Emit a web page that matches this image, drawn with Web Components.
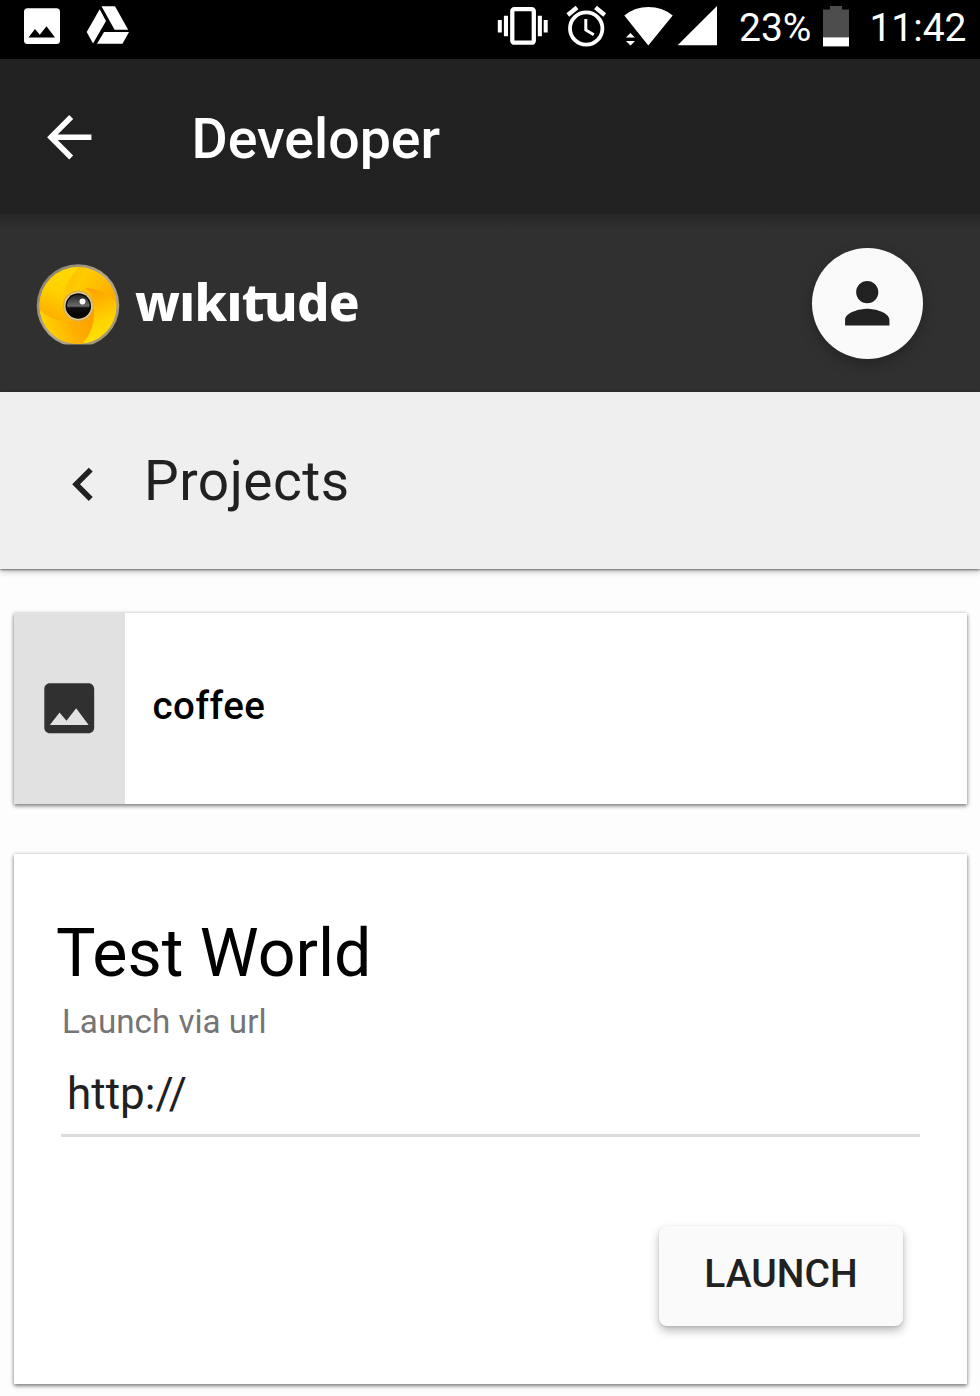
<!DOCTYPE html>
<html lang="en">

<head>
  <meta charset="UTF-8">
  <meta name="viewport" content="width=device-width, initial-scale=1.0">
  <title>Developer</title>
  <style>
    body {
      margin: 0;
      background: #fdfdfd;
      font-family: Roboto, "Liberation Sans", sans-serif;
      color: #212121;
      overflow: hidden;
    }

    main {
      display: flex;
      flex-direction: column;
      gap: 50px;
      padding: 44px 13px 12px 14px;
    }
  </style>
</head>

<body>
  <status-bar battery="23%" time="11:42"></status-bar>
  <app-bar>Developer</app-bar>
  <brand-bar>wıkıtude</brand-bar>
  <section-bar>Projects</section-bar>
  <main>
    <project-card>coffee</project-card>
    <launch-card label="Launch via url" value="http://">
      Test World
      <raised-button slot="action">LAUNCH</raised-button>
    </launch-card>
  </main>

  <script>
    const ICONS = {
      back: '<path d="M20 11H7.83l5.59-5.59L12 4l-8 8 8 8 1.41-1.41L7.83 13H20v-2z"/>',
      chevron: '<path d="M15.41 7.41L14 6l-6 6 6 6 1.41-1.41L10.83 12z"/>',
      person: '<path d="M12 12c2.21 0 4-1.79 4-4s-1.79-4-4-4-4 1.79-4 4 1.79 4 4 4zm0 2c-2.67 0-8 1.34-8 4v2h16v-2c0-2.66-5.33-4-8-4z"/>',
      image: '<path d="M21 19V5c0-1.1-.9-2-2-2H5c-1.1 0-2 .9-2 2v14c0 1.1.9 2 2 2h14c1.1 0 2-.9 2-2zM8.5 13.5l2.5 3.010L14.500 12l4.500 6H5l3.500-4.500z"/>'
    };

    function define(name, render) {
      customElements.define(name, class extends HTMLElement {
        constructor() {
          super();
          this.attachShadow({ mode: 'open' });
        }

        connectedCallback() {
          const template = document.createElement('template');
          template.innerHTML = render(this);
          this.shadowRoot.replaceChildren(template.content.cloneNode(true));
        }
      });
    }

    define('md-icon', (el) => `
      <style>
        :host {
          display: block;
          flex: none;
          width: 66.5px;
          height: 66.5px;
        }

        svg {
          display: block;
          width: 100%;
          height: 100%;
          fill: currentColor;
        }
      </style>
      <svg viewBox="0 0 24 24">${ICONS[el.getAttribute('name')]}</svg>
    `);

    define('status-bar', (el) => `
      <style>
        :host {
          display: flex;
          justify-content: space-between;
          height: 59px;
          background: #000;
          color: #fff;
          font-size: 39px;
          line-height: 57px;
        }

        div {
          display: flex;
        }

        .notifications {
          padding-left: 23.5px;
          gap: 26.5px;
        }

        .system {
          padding-right: 13.5px;
        }

        svg {
          display: block;
          flex: none;
          height: 59px;
          fill: #fff;
        }

        .alarm {
          margin: 0 17px 0 18px;
        }

        .signal {
          margin: 0 22px 0 4px;
        }

        .battery {
          margin: 0 20px 0 12px;
        }
      </style>
      <div class="notifications">
        <svg width="36" viewBox="0 0 36 59"><path fill-rule="evenodd" d="M3.5 8.2H32.5A3.5 3.5 0 0 1 36 11.7V40.5A3.5 3.5 0 0 1 32.5 44H3.5A3.5 3.5 0 0 1 0 40.5V11.7A3.5 3.5 0 0 1 3.5 8.2zM4.5 37.5H31L22.5 26.2 15.8 34.8 11 29z"/></svg>
        <svg width="43" viewBox="86 0 43 59"><path d="M99.7 9.3L106 21 93 43.5 86.7 32zM101.5 6.3H115L128.2 29.8H114.6zM104 32H129L122.5 43.7H97z"/></svg>
      </div>
      <div class="system">
        <svg width="51" viewBox="496 0 51 59"><rect x="511.3" y="9.2" width="21.5" height="33.5" rx="2" fill="none" stroke="#fff" stroke-width="4.3"/><path d="M496.8 20h4v12.5h-4zM502.9 15.7h4.1v20.6h-4.1zM536.8 15.7h4.1v20.6h-4.1zM542.7 20h4v12.5h-4z"/></svg>
        <svg class="alarm" width="40" viewBox="565 0 40 59"><g fill="none" stroke="#fff"><circle cx="585.2" cy="28.5" r="16.2" stroke-width="3.8"/><path d="M584.8 19v11l8 4.8" stroke-width="3"/><path d="M566.8 15l9.2-7.5M594.5 7.5l9.2 7.5" stroke-width="4.3"/></g></svg>
        <svg width="50" viewBox="622 0 50 59"><path d="M647.3 45.5L623.3 15.4Q634 7 647.5 7T671.7 15.4zM629.4 33l4.5 4.6h-9zM625 41h9l-4.5 4.4z"/></svg>
        <svg class="signal" width="40" viewBox="676 0 40 59"><path d="M716 6V45.3H676.6z"/></svg>
        <span>${el.getAttribute('battery')}</span>
        <svg class="battery" width="26" viewBox="823 0 26 59"><path fill="#4d4d4d" d="M823 9.5h7V6h12v3.5h7V38h-26z"/><path d="M823 37.4h26v9h-26z"/></svg>
        <span>${el.getAttribute('time')}</span>
      </div>
    `);

    define('app-bar', () => `
      <style>
        :host {
          display: flex;
          align-items: center;
          box-sizing: border-box;
          height: 155px;
          padding: 1px 0 0 36px;
          gap: 89px;
          background: #212121;
          color: #fff;
        }

        h1 {
          margin: 0;
          padding-top: 5px;
          font-size: 55.5px;
          font-weight: 500;
          line-height: 66px;
        }
      </style>
      <md-icon name="back"></md-icon>
      <h1><slot></slot></h1>
    `);

    define('wikitude-logo', () => `
      <style>
        :host {
          display: block;
          flex: none;
          width: 84px;
          height: 84px;
        }

        svg {
          display: block;
        }
      </style>
      <svg width="84" height="84" viewBox="0 0 84 84">
        <defs>
          <clipPath id="cut"><path d="M0 0h84v81.5H0z"/></clipPath>
          <clipPath id="disc"><circle cx="42" cy="42.5" r="38.5"/></clipPath>
          <linearGradient id="rim" x1="0" y1="0" x2="1" y2="1">
            <stop offset="0" stop-color="#7d776c"/>
            <stop offset=".5" stop-color="#b5a98c"/>
            <stop offset="1" stop-color="#9c906c"/>
          </linearGradient>
          <linearGradient id="a" x1="0" y1="0" x2="1" y2=".4">
            <stop offset="0" stop-color="#ffb800"/>
            <stop offset=".4" stop-color="#ffcc00"/>
            <stop offset="1" stop-color="#ffac00"/>
          </linearGradient>
          <linearGradient id="b" x1=".3" y1="0" x2=".5" y2="1">
            <stop offset="0" stop-color="#ffa000"/>
            <stop offset=".6" stop-color="#ffd400"/>
            <stop offset="1" stop-color="#ffe600"/>
          </linearGradient>
          <linearGradient id="c" x1="1" y1="0" x2="0" y2=".3">
            <stop offset="0" stop-color="#ff9c00"/>
            <stop offset=".5" stop-color="#ffb000"/>
            <stop offset="1" stop-color="#ffd800"/>
          </linearGradient>
          <linearGradient id="d" x1=".3" y1="1" x2=".6" y2="0">
            <stop offset="0" stop-color="#ffaa00"/>
            <stop offset=".5" stop-color="#ffd000"/>
            <stop offset="1" stop-color="#ffd800"/>
          </linearGradient>
          <linearGradient id="pupil" x1="0" y1="0" x2="0" y2="1">
            <stop offset="0" stop-color="#222"/>
            <stop offset=".5" stop-color="#6c6c6c"/>
            <stop offset=".58" stop-color="#111"/>
            <stop offset="1" stop-color="#000"/>
          </linearGradient>
          <radialGradient id="ring">
            <stop offset=".82" stop-color="#f0e2bc"/>
            <stop offset="1" stop-color="#cfa23c"/>
          </radialGradient>
        </defs>
        <g clip-path="url(#cut)">
          <circle cx="42" cy="42.5" r="41.3" fill="url(#rim)"/>
          <g clip-path="url(#disc)">
            <path fill="#ffc400" d="M0 0h84v84H0z"/>
            <path fill="url(#a)" d="M27 40Q27 20 44 3L80 3 84 44Q68 25 49 25 33 27 27 40z"/>
            <path fill="url(#b)" d="M49 25Q70 25 82 45L84 84 44 84Q60 68 58 45 57 30 49 25z"/>
            <path fill="url(#c)" d="M58 45Q60 68 43 84L3 84 2 45Q18 60 36 58 52 58 58 45z"/>
            <path fill="url(#d)" d="M36 58Q15 60 2 45L2 2 45 2Q27 20 27 40 28 52 36 58z"/>
          </g>
          <circle cx="42.3" cy="43" r="15.2" fill="url(#ring)"/>
          <circle cx="42.3" cy="43" r="12.8" fill="#050505"/>
          <circle cx="42.3" cy="43" r="11.3" fill="url(#pupil)"/>
          <circle cx="46.5" cy="38.5" r="3" fill="#fff"/>
        </g>
      </svg>
    `);

    define('brand-bar', () => `
      <style>
        :host {
          display: flex;
          align-items: center;
          box-sizing: border-box;
          height: 177.5px;
          padding: 0 57px 0 36px;
          background: linear-gradient(#272727, #303030 16px);
          color: #fff;
        }

        wikitude-logo {
          margin-top: 4px;
        }

        .name {
          position: relative;
          margin: 0 0 4px 15px;
          font-family: "Noto Sans", "Open Sans", sans-serif;
          font-size: 51px;
          font-weight: 800;
          line-height: 70px;
          letter-spacing: -.6px;
        }

        /* joins the crossbar of the t to the u */
        .name::after {
          content: "";
          position: absolute;
          left: 112px;
          top: 27px;
          width: 29px;
          height: 6px;
          background: #fff;
        }

        .avatar {
          display: grid;
          place-items: center;
          width: 111px;
          height: 111px;
          margin: 1px 0 0 auto;
          border-radius: 50%;
          background: #fafafa;
          color: #212121;
          box-shadow: 0 5px 14px rgba(0, 0, 0, .26);
        }
      </style>
      <wikitude-logo></wikitude-logo>
      <span class="name"><slot></slot></span>
      <div class="avatar"><md-icon name="person"></md-icon></div>
    `);

    define('section-bar', () => `
      <style>
        :host {
          display: flex;
          align-items: center;
          box-sizing: border-box;
          height: 177.5px;
          padding-left: 50px;
          gap: 27.5px;
          background: #efefef;
          box-shadow: 0 1px 2px rgba(0, 0, 0, .5), 0 3px 6px rgba(0, 0, 0, .22);
        }

        md-icon {
          margin-top: 8px;
        }

        h2 {
          margin: 0;
          padding-top: 2px;
          font-size: 55px;
          font-weight: 400;
          line-height: 64px;
          letter-spacing: .5px;
        }
      </style>
      <md-icon name="chevron"></md-icon>
      <h2><slot></slot></h2>
    `);

    define('project-card', () => `
      <style>
        :host {
          display: flex;
          height: 191px;
          background: #fff;
          box-shadow: 0 2px 4px rgba(0, 0, 0, .48), 0 0 4px rgba(0, 0, 0, .14);
        }

        .thumb {
          display: grid;
          place-items: center;
          width: 111px;
          padding-bottom: 1px;
          box-sizing: border-box;
          background: #e1e1e1;
          color: #303030;
        }

        .title {
          align-self: center;
          padding: 0 0 5px 27.5px;
          font-size: 38.5px;
          font-weight: 500;
          line-height: 46px;
          letter-spacing: .5px;
          color: #000;
        }
      </style>
      <div class="thumb"><md-icon name="image"></md-icon></div>
      <div class="title"><slot></slot></div>
    `);

    define('raised-button', () => `
      <style>
        :host {
          display: block;
        }

        button {
          display: block;
          width: 244px;
          height: 100px;
          margin: 0;
          padding: 0 0 4px;
          border: 0;
          border-radius: 8px;
          background: #fafafa;
          box-shadow: 0 5px 10px rgba(0, 0, 0, .25), 0 1px 3px rgba(0, 0, 0, .12);
          color: #212121;
          font: 500 39px/46px Roboto, sans-serif;
        }
      </style>
      <button type="button"><slot></slot></button>
    `);

    define('launch-card', (el) => `
      <style>
        :host {
          display: flex;
          flex-direction: column;
          box-sizing: border-box;
          height: 530px;
          padding: 59px 47px 58px 47px;
          background: #fff;
          box-shadow: 0 2px 4px rgba(0, 0, 0, .48), 0 0 4px rgba(0, 0, 0, .14);
        }

        h3 {
          margin: 0 0 0 -5px;
          font-size: 66.3px;
          font-weight: 400;
          line-height: 80px;
          color: #000;
        }

        label {
          margin: 9px 0 0 1px;
          font-size: 33.2px;
          line-height: 40px;
          color: #757575;
        }

        .field {
          height: 95px;
          box-sizing: border-box;
          padding: 26px 6px 0;
          border-bottom: 3px solid #dcdcdc;
          font-size: 44px;
          line-height: 52px;
        }

        .actions {
          display: flex;
          justify-content: flex-end;
          margin-top: auto;
          padding-right: 17px;
        }
      </style>
      <h3><slot></slot></h3>
      <label>${el.getAttribute('label')}</label>
      <div class="field">${el.getAttribute('value')}</div>
      <div class="actions"><slot name="action"></slot></div>
    `);
  </script>
</body>

</html>
